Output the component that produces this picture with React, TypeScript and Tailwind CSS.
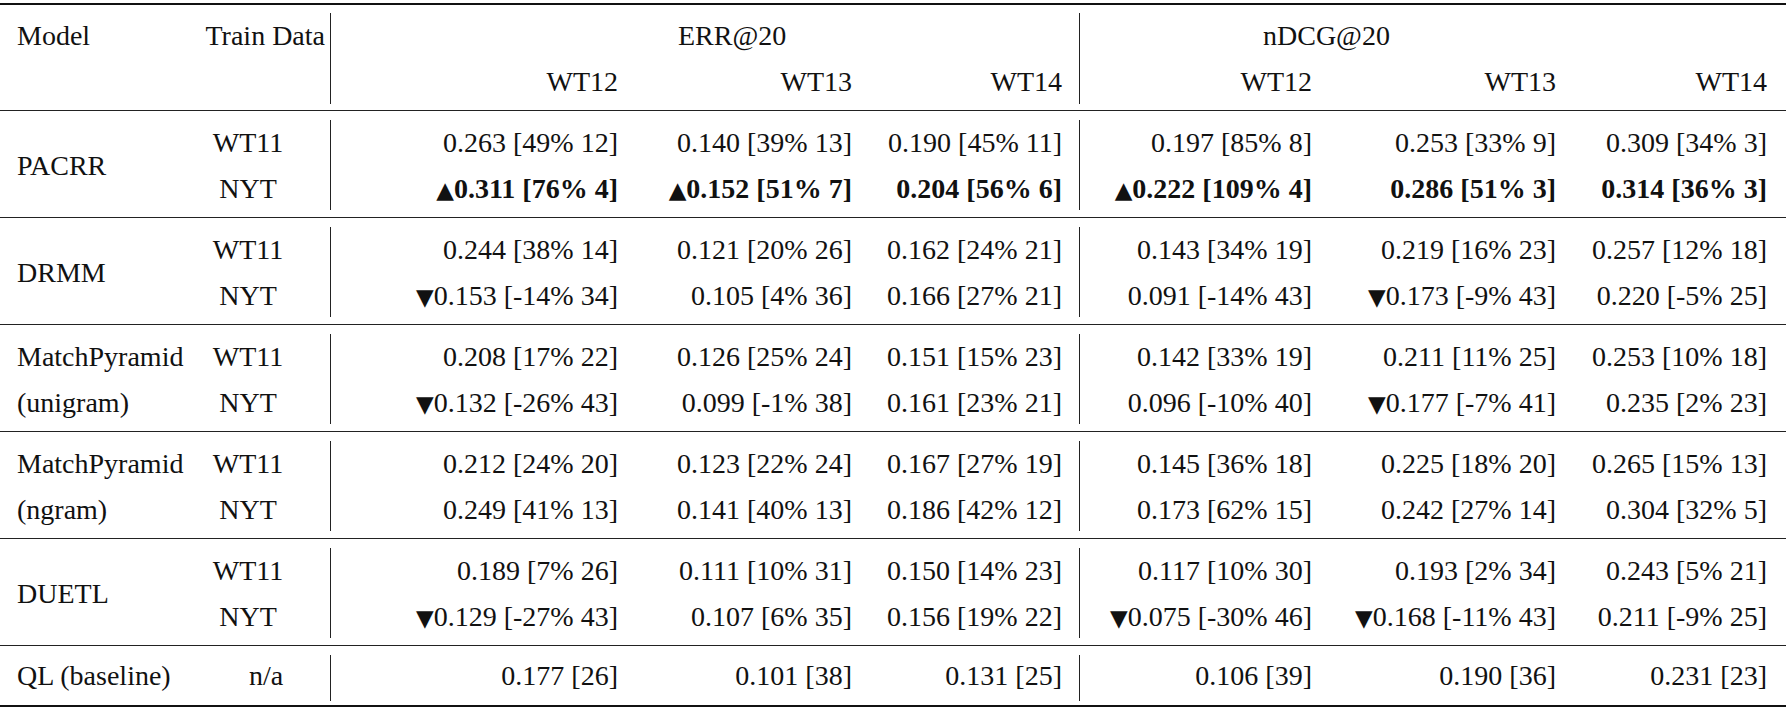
import React from "react";

type Row = { train: string; vals: string[]; bold?: boolean };
type Group = { model: string[]; rows: Row[] };

const groups: Group[] = [
  {
    model: ["PACRR"],
    rows: [
      { train: "WT11", vals: ["0.263 [49% 12]", "0.140 [39% 13]", "0.190 [45% 11]", "0.197 [85% 8]", "0.253 [33% 9]", "0.309 [34% 3]"] },
      { train: "NYT", bold: true, vals: ["▲0.311 [76% 4]", "▲0.152 [51% 7]", "0.204 [56% 6]", "▲0.222 [109% 4]", "0.286 [51% 3]", "0.314 [36% 3]"] },
    ],
  },
  {
    model: ["DRMM"],
    rows: [
      { train: "WT11", vals: ["0.244 [38% 14]", "0.121 [20% 26]", "0.162 [24% 21]", "0.143 [34% 19]", "0.219 [16% 23]", "0.257 [12% 18]"] },
      { train: "NYT", vals: ["▼0.153 [-14% 34]", "0.105 [4% 36]", "0.166 [27% 21]", "0.091 [-14% 43]", "▼0.173 [-9% 43]", "0.220 [-5% 25]"] },
    ],
  },
  {
    model: ["MatchPyramid", "(unigram)"],
    rows: [
      { train: "WT11", vals: ["0.208 [17% 22]", "0.126 [25% 24]", "0.151 [15% 23]", "0.142 [33% 19]", "0.211 [11% 25]", "0.253 [10% 18]"] },
      { train: "NYT", vals: ["▼0.132 [-26% 43]", "0.099 [-1% 38]", "0.161 [23% 21]", "0.096 [-10% 40]", "▼0.177 [-7% 41]", "0.235 [2% 23]"] },
    ],
  },
  {
    model: ["MatchPyramid", "(ngram)"],
    rows: [
      { train: "WT11", vals: ["0.212 [24% 20]", "0.123 [22% 24]", "0.167 [27% 19]", "0.145 [36% 18]", "0.225 [18% 20]", "0.265 [15% 13]"] },
      { train: "NYT", vals: ["0.249 [41% 13]", "0.141 [40% 13]", "0.186 [42% 12]", "0.173 [62% 15]", "0.242 [27% 14]", "0.304 [32% 5]"] },
    ],
  },
  {
    model: ["DUETL"],
    rows: [
      { train: "WT11", vals: ["0.189 [7% 26]", "0.111 [10% 31]", "0.150 [14% 23]", "0.117 [10% 30]", "0.193 [2% 34]", "0.243 [5% 21]"] },
      { train: "NYT", vals: ["▼0.129 [-27% 43]", "0.107 [6% 35]", "0.156 [19% 22]", "▼0.075 [-30% 46]", "▼0.168 [-11% 43]", "0.211 [-9% 25]"] },
    ],
  },
];

const baseline = ["0.177 [26]", "0.101 [38]", "0.131 [25]", "0.106 [39]", "0.190 [36]", "0.231 [23]"];

// set on every text element directly
const serif = "font-['Liberation_Serif']";

// widths of the six value columns (ERR x3, nDCG x3)
const colCls = [
  "w-[305px] pr-[18px]",
  "w-[234px] pr-[18px]",
  "w-[209px] pr-[17px]",
  "w-[250px] pr-[18px]",
  "w-[244px] pr-[18px]",
  "w-[212px] pr-[19px]",
];

const Rule = ({ thick }: { thick?: boolean }) => (
  <div className={thick ? "h-[2px] bg-[#111]" : "h-px bg-[#222]"} />
);

const Sep = ({ cls }: { cls: string }) => <div className={`w-px shrink-0 bg-[#222] ${cls}`} />;

// significance triangle set in DejaVu Sans so it sits tight against the number
const Cell = ({ text }: { text: string }) => {
  const mark = text[0] === "▲" || text[0] === "▼" ? text[0] : "";
  const rest = mark ? text.slice(1) : text;
  return (
    <>
      {mark && <span className="font-['DejaVu_Sans'] text-[23px]">{mark}</span>}
      {rest}
    </>
  );
};

const ValueCols = ({ from, lines, bold }: { from: number; lines: string[][]; bold?: boolean[] }) => (
  <>
    {[0, 1, 2].map((i) => (
      <div key={i} className={`shrink-0 text-right ${colCls[from + i]}`}>
        {lines.map((l, j) => (
          <div key={j} className={`${serif} ${bold?.[j] ? "font-bold" : ""}`}>
            <Cell text={l[from + i]} />
          </div>
        ))}
      </div>
    ))}
  </>
);

export default function App() {
  return (
    <div className="w-[1786px] h-[710px] bg-white pt-[3px] font-['Liberation_Serif'] text-[28px] leading-[46px] text-[#111]">
      <Rule thick />
      {/* header */}
      <div className="flex h-[105px]">
        <div className={`w-[185px] shrink-0 pl-[17px] pt-[8px] ${serif}`}>Model</div>
        <div className={`w-[145px] shrink-0 pr-[5px] pt-[8px] text-right ${serif}`}>Train Data</div>
        <Sep cls="mt-[8px] mb-[6px]" />
        <div className="w-[748px] shrink-0 pt-[8px]">
          <div className={`pl-[347px] ${serif}`}>ERR@20</div>
          <div className="flex">
            {["WT12", "WT13", "WT14"].map((h, i) => (
              <div key={h} className={`shrink-0 text-right ${colCls[i]} ${serif}`}>
                {h}
              </div>
            ))}
          </div>
        </div>
        <Sep cls="mt-[8px] mb-[6px]" />
        <div className="w-[706px] shrink-0 pt-[8px]">
          <div className={`pl-[183px] ${serif}`}>nDCG@20</div>
          <div className="flex">
            {["WT12", "WT13", "WT14"].map((h, i) => (
              <div key={h} className={`shrink-0 text-right ${colCls[i + 3]} ${serif}`}>
                {h}
              </div>
            ))}
          </div>
        </div>
      </div>
      <Rule />
      {groups.map((g) => {
        const lines = g.rows.map((r) => r.vals);
        const bold = g.rows.map((r) => !!r.bold);
        return (
          <React.Fragment key={g.model.join(" ")}>
            <div className="flex h-[106px]">
              <div className="w-[185px] shrink-0 pl-[17px] pt-[9px]">
                {g.model.length === 1 ? (
                  <div className={`leading-[92px] ${serif}`}>{g.model[0]}</div>
                ) : (
                  g.model.map((m) => (
                    <div key={m} className={serif}>
                      {m}
                    </div>
                  ))
                )}
              </div>
              <div className="w-[145px] shrink-0 pr-[19px] pt-[9px] text-center">
                {g.rows.map((r) => (
                  <div key={r.train} className={serif}>
                    {r.train}
                  </div>
                ))}
              </div>
              <Sep cls="mt-[9px] mb-[7px]" />
              <div className="flex pt-[9px]">
                <ValueCols from={0} lines={lines} bold={bold} />
              </div>
              <Sep cls="mt-[9px] mb-[7px]" />
              <div className="flex pt-[9px]">
                <ValueCols from={3} lines={lines} bold={bold} />
              </div>
            </div>
            <Rule />
          </React.Fragment>
        );
      })}
      {/* baseline row */}
      <div className="flex h-[59px]">
        <div className={`w-[185px] shrink-0 pl-[17px] pt-[7px] ${serif}`}>QL (baseline)</div>
        <div className={`w-[145px] shrink-0 pl-[17px] pt-[7px] text-center ${serif}`}>n/a</div>
        <Sep cls="mt-[9px] mb-[4px]" />
        <div className="flex pt-[7px]">
          <ValueCols from={0} lines={[baseline]} />
        </div>
        <Sep cls="mt-[9px] mb-[4px]" />
        <div className="flex pt-[7px]">
          <ValueCols from={3} lines={[baseline]} />
        </div>
      </div>
      <Rule thick />
    </div>
  );
}
